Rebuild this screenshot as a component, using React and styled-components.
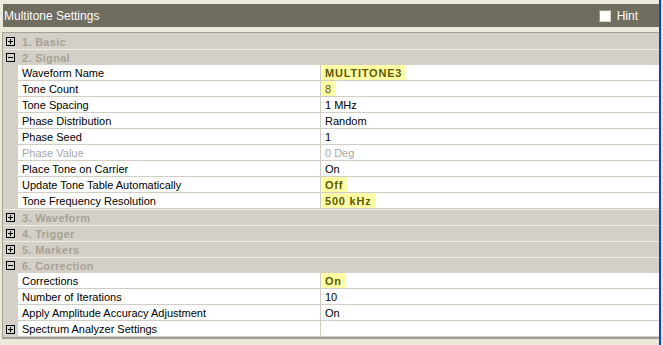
import React from 'react';
import styled, { createGlobalStyle } from 'styled-components';

const GlobalStyle = createGlobalStyle`
  html, body {
    margin: 0;
    padding: 0;
    background: #ece9d8;
  }
  body {
    font-family: "Liberation Sans", Arial, sans-serif;
  }
`;

const Window = styled.div`
  width: 661px;
  height: 345px;
  background: #ece9d8;
  border-right: 2px solid #0b3fd8;
  padding-top: 4px;
  box-sizing: border-box;
  overflow: hidden;
`;

const TitleBar = styled.div`
  height: 23px;
  margin-left: 3px;
  background: #6f6c60;
  display: flex;
  align-items: center;
  justify-content: space-between;
  padding: 0 21px 0 1px;
  color: #fff;
  font-size: 12px;
`;

const HintBox = styled.label`
  display: flex;
  align-items: center;
  gap: 6px;
  font-size: 12px;
`;

const Check = styled.span`
  width: 10px;
  height: 10px;
  background: #fff;
  border: 1px solid #d8d4c4;
  border-top-color: #9a9686;
  border-left-color: #9a9686;
`;

const Grid = styled.div`
  margin: 5px 0 0 2px;
  border-top: 1px solid #a6a394;
  border-left: 1px solid #a6a394;
  border-bottom: 2px solid #a0a0a0;
  font-size: 11px;
`;

const SectionRow = styled.div`
  height: 15px;
  display: flex;
  align-items: center;
  background: #d4d0c8;
  border-top: 1px solid ${p => (p.first ? '#d4d0c8' : '#f0eee4')};
`;

const Gutter = styled.div`
  width: 15px;
  flex-shrink: 0;
  display: flex;
  align-items: center;
  justify-content: center;
  align-self: stretch;
  background: #d4d0c8;
`;

const SectionTitle = styled.span`
  color: #a6a396;
  font-weight: bold;
  padding-left: 4px;
  letter-spacing: 0.3px;
`;

const PropRow = styled.div`
  height: 16px;
  display: flex;
  background: #fff;
`;

const LabelCell = styled.div`
  width: 303px;
  flex-shrink: 0;
  box-sizing: border-box;
  padding-left: 4px;
  display: flex;
  align-items: center;
  border-bottom: 1px solid #d0cdc4;
  border-right: 1px solid #d0cdc4;
  color: ${p => (p.disabled ? '#a8a8a8' : '#000')};
  white-space: nowrap;
`;

const ValueCell = styled.div`
  flex: 1;
  display: flex;
  align-items: stretch;
  border-bottom: 1px solid #d0cdc4;
`;

const Value = styled.span`
  display: flex;
  align-items: center;
  padding: 0 4px 0 4px;
  background: ${p => (p.hl ? '#ffffa8' : 'transparent')};
  color: ${p => (p.hl ? '#5c5a00' : p.disabled ? '#a8a8a8' : '#000')};
  font-weight: ${p => (p.bold ? 'bold' : 'normal')};
  letter-spacing: ${p => (p.bold ? '0.8px' : '0')};
`;

const Expander = ({ open }) => (
  <svg width="9" height="9" viewBox="0 0 9 9">
    <rect x="0.5" y="0.5" width="8" height="8" fill="none" stroke="#000" />
    <line x1="2" y1="4.5" x2="7" y2="4.5" stroke="#000" />
    {!open && <line x1="4.5" y1="2" x2="4.5" y2="7" stroke="#000" />}
  </svg>
);

const sections = [
  { title: '1. Basic' },
  {
    title: '2. Signal',
    open: true,
    rows: [
      { label: 'Waveform Name', value: 'MULTITONE3', hl: true, bold: true },
      { label: 'Tone Count', value: '8', hl: true },
      { label: 'Tone Spacing', value: '1 MHz' },
      { label: 'Phase Distribution', value: 'Random' },
      { label: 'Phase Seed', value: '1' },
      { label: 'Phase Value', value: '0 Deg', disabled: true },
      { label: 'Place Tone on Carrier', value: 'On' },
      { label: 'Update Tone Table Automatically', value: 'Off', hl: true, bold: true },
      { label: 'Tone Frequency Resolution', value: '500 kHz', hl: true, bold: true },
    ],
  },
  { title: '3. Waveform' },
  { title: '4. Trigger' },
  { title: '5. Markers' },
  {
    title: '6. Correction',
    open: true,
    rows: [
      { label: 'Corrections', value: 'On', hl: true, bold: true },
      { label: 'Number of Iterations', value: '10' },
      { label: 'Apply Amplitude Accuracy Adjustment', value: 'On' },
      { label: 'Spectrum Analyzer Settings', value: '', expandable: true },
    ],
  },
];

export default function App() {
  return (
    <>
      <GlobalStyle />
      <Window>
        <TitleBar>
          <span>Multitone Settings</span>
          <HintBox>
            <Check />
            Hint
          </HintBox>
        </TitleBar>
        <Grid>
          {sections.map((s, i) => (
            <React.Fragment key={s.title}>
              <SectionRow first={i === 0}>
                <Gutter>
                  <Expander open={s.open} />
                </Gutter>
                <SectionTitle>{s.title}</SectionTitle>
              </SectionRow>
              {s.open &&
                s.rows.map(r => (
                  <PropRow key={r.label}>
                    <Gutter>{r.expandable && <Expander />}</Gutter>
                    <LabelCell disabled={r.disabled}>{r.label}</LabelCell>
                    <ValueCell>
                      {r.value && (
                        <Value hl={r.hl} bold={r.bold} disabled={r.disabled}>
                          {r.value}
                        </Value>
                      )}
                    </ValueCell>
                  </PropRow>
                ))}
            </React.Fragment>
          ))}
        </Grid>
      </Window>
    </>
  );
}
